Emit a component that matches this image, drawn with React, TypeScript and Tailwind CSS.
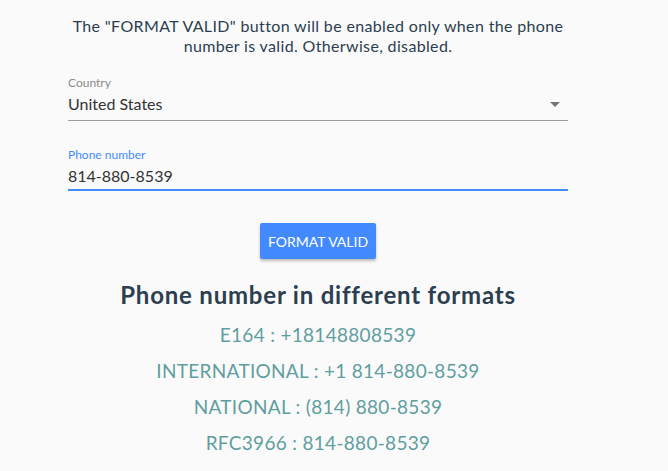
import { useState } from "react";

const formats = [
  ["E164", "+18148808539"],
  ["INTERNATIONAL", "+1 814-880-8539"],
  ["NATIONAL", "(814) 880-8539"],
  ["RFC3966", "814-880-8539"],
];

export default function App() {
  const [phone, setPhone] = useState("814-880-8539");

  return (
    <div className="min-h-[471px] bg-[#fafafa] font-['Lato',sans-serif] text-[#2c3e50] antialiased">
      <div className="flex w-[636px] flex-col items-center pt-[16px]">
        <p className="w-[520px] text-center text-[16px] leading-[20px] tracking-[0.35px]">
          The "FORMAT VALID" button will be enabled only when the phone number is valid. Otherwise, disabled.
        </p>

        <div className="mt-[20px] flex w-[500px] flex-col">
          <label className="text-[12px] leading-[14px] text-[#8a8a8a]">Country</label>
          <div className="flex items-center justify-between border-b border-[#9e9e9e] pt-[4px] pb-[6px] pr-[8px]">
            <span className="text-[16px] leading-[20px] text-[#333]">United States</span>
            <svg width="10" height="5" viewBox="0 0 10 5">
              <path d="M0 0h10L5 5z" fill="#757575" />
            </svg>
          </div>

          <label className="mt-[27px] text-[12px] leading-[14px] text-[#448aff]">Phone number</label>
          <div className="flex items-center border-b-2 border-[#448aff] pt-[4px] pb-[3px]">
            <input
              value={phone}
              onChange={(e) => setPhone(e.target.value)}
              className="h-[20px] w-full bg-transparent text-[16px] leading-[20px] text-[#333] outline-none"
            />
          </div>
        </div>

        <button
          type="button"
          className="mt-[32px] h-[36px] rounded-[2px] bg-[#448aff] px-[8px] text-[14px] text-white shadow-[0_2px_3px_rgba(0,0,0,0.25)]"
        >
          FORMAT VALID
        </button>

        <h2 className="mt-[21px] text-[24px] leading-[30px] font-bold tracking-[0.8px]">
          Phone number in different formats
        </h2>

        <div className="mt-[13px] flex flex-col items-center gap-[12px] text-[19px] leading-[24px] tracking-[0.3px] text-[#5f9ea0]">
          {formats.map(([k, v]) => (
            <div key={k}>
              {k} : {v}
            </div>
          ))}
        </div>
      </div>
    </div>
  );
}
